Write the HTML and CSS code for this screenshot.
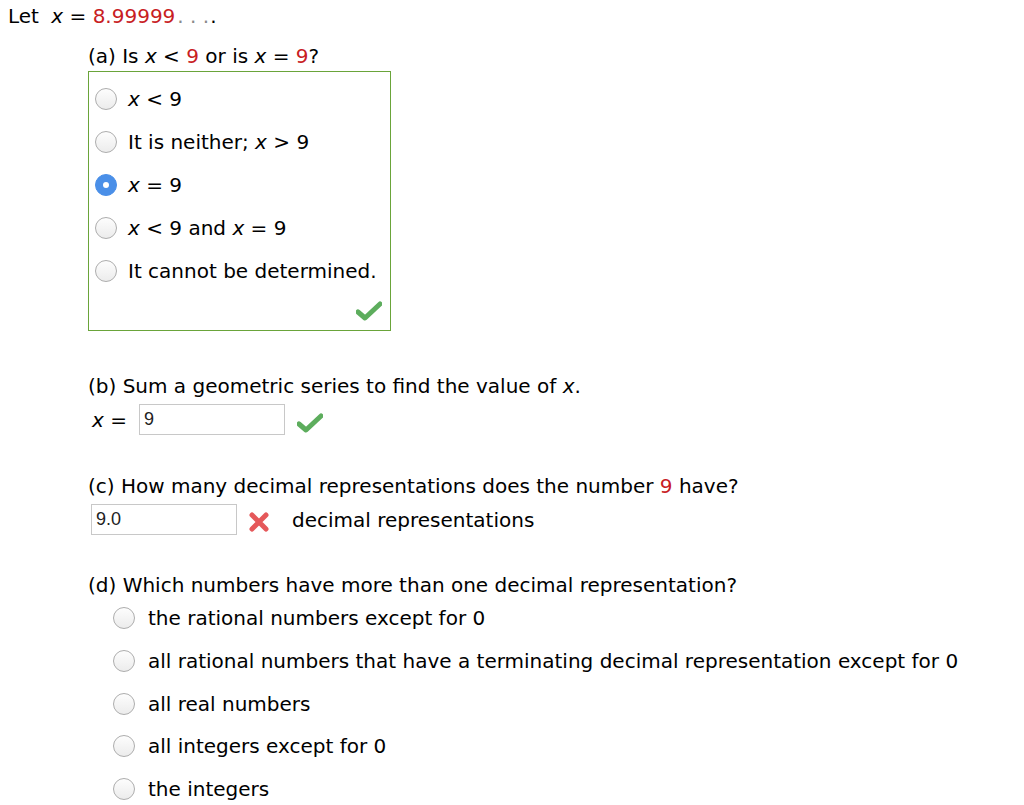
FILE: index.html
```
<!DOCTYPE html>
<html lang="en">
<head>
<meta charset="utf-8">
<title>Decimal representations</title>
<link rel="stylesheet" href="styles.css">
</head>
<body>
<div class="intro">Let <i class="var">x</i> = <span class="red">8.99999</span><span class="dots">. . .</span><span class="stop">.</span></div>

<div class="part part-a">
  <div class="q">(a) Is <i>x</i> &lt; <span class="red">9</span> or is <i>x</i> = <span class="red">9</span>?</div>
  <div class="answer-box">
    <label class="opt"><span class="radio"></span><span><i>x</i> &lt; 9</span></label>
    <label class="opt"><span class="radio"></span><span>It is neither; <i>x</i> &gt; 9</span></label>
    <label class="opt"><span class="radio checked"></span><span><i>x</i> = 9</span></label>
    <label class="opt"><span class="radio"></span><span><i>x</i> &lt; 9 and <i>x</i> = 9</span></label>
    <label class="opt"><span class="radio"></span><span>It cannot be determined.</span></label>
    <div class="box-foot">
      <svg class="tick" width="26" height="20" viewBox="0 0 26 20"><path d="M2 11 L9 17 L24 3" fill="none" stroke="#5dad5d" stroke-width="5" stroke-linecap="round" stroke-linejoin="round"/></svg>
    </div>
  </div>
</div>

<div class="part part-b">
  <div class="q">(b) Sum a geometric series to find the value of <i>x</i>.</div>
  <div class="row">
    <span class="lhs"><i>x</i> = </span>
    <span class="field w146">9</span>
    <svg class="tick" width="26" height="20" viewBox="0 0 26 20"><path d="M2 11 L9 17 L24 3" fill="none" stroke="#5dad5d" stroke-width="5" stroke-linecap="round" stroke-linejoin="round"/></svg>
  </div>
</div>

<div class="part part-c">
  <div class="q">(c) How many decimal representations does the number <span class="red">9</span> have?</div>
  <div class="row">
    <span class="field w146">9.0</span>
    <svg class="cross" width="20" height="20" viewBox="0 0 20 20"><path d="M3 3 L17 17 M17 3 L3 17" fill="none" stroke="#e5585a" stroke-width="5" stroke-linecap="round"/></svg>
    <span>decimal representations</span>
  </div>
</div>

<div class="part part-d">
  <div class="q">(d) Which numbers have more than one decimal representation?</div>
  <div class="list">
    <label class="opt"><span class="radio"></span><span>the rational numbers except for 0</span></label>
    <label class="opt"><span class="radio"></span><span>all rational numbers that have a terminating decimal representation except for 0</span></label>
    <label class="opt"><span class="radio"></span><span>all real numbers</span></label>
    <label class="opt"><span class="radio"></span><span>all integers except for 0</span></label>
    <label class="opt"><span class="radio"></span><span>the integers</span></label>
  </div>
</div>
</body>
</html>
```

FILE: styles.css
```
body {
  margin: 0;
  padding: 4px 8px;
  font-family: "DejaVu Sans", Verdana, sans-serif;
  font-size: 20px;
  color: #000;
  background: #fff;
}
i { font-style: italic; }
.red { color: #c8201f; }
.dots { color: #8a8a8a; margin-left: 2px; }
.stop { margin-left: 1px; }
.intro { line-height: 24px; }
.intro .var { margin-left: 6px; }

.part { margin-left: 80px; }
.q { line-height: 24px; }

.part-a { margin-top: 16px; }
.answer-box {
  width: 303px;
  height: 260px;
  margin-top: 3px;
  border: 1px solid #6aa43a;
  box-sizing: border-box;
  padding-top: 16px;
}
.opt {
  display: flex;
  align-items: center;
  gap: 11px;
  height: 22px;
  margin-bottom: 21px;
  padding-left: 6px;
}
.radio {
  width: 20px; height: 20px;
  border: 1px solid #adadad;
  border-radius: 50%;
  background: linear-gradient(#fdfdfd, #ececec);
  flex: none;
  position: relative;
}
.radio.checked {
  border-color: #4a8fe8;
  background: #4a8fe8;
}
.radio.checked::after {
  content: "";
  position: absolute;
  left: 7px; top: 7px;
  width: 6px; height: 6px;
  border-radius: 50%;
  background: #fff;
}
.box-foot { display: flex; justify-content: flex-end; padding-right: 8px; margin-top: -2px; }

.part-b { margin-top: 43px; }
.row { display: flex; align-items: center; margin-top: 6px; }
.lhs { margin: 0 12px 0 4px; }
.field {
  display: inline-block;
  height: 31px;
  line-height: 29px;
  box-sizing: border-box;
  border: 1px solid #c8c8c8;
  padding: 0 4px;
  font-family: "Liberation Sans", Arial, sans-serif;
  font-size: 18px;
  color: #222;
}
.w146 { width: 146px; }
.part-b .tick { margin-left: 12px; margin-top: 6px; }

.part-c { margin-top: 39px; }
.part-c .row { margin-left: 3px; }
.cross { margin: 4px 0 0 12px; }
.part-c .row span:last-child { margin-left: 23px; }

.part-d { margin-top: 38px; }
.list { margin-left: 22px; margin-top: 10px; }
.list .opt { margin-bottom: 20.75px; padding-left: 3px; gap: 13px; }
```
